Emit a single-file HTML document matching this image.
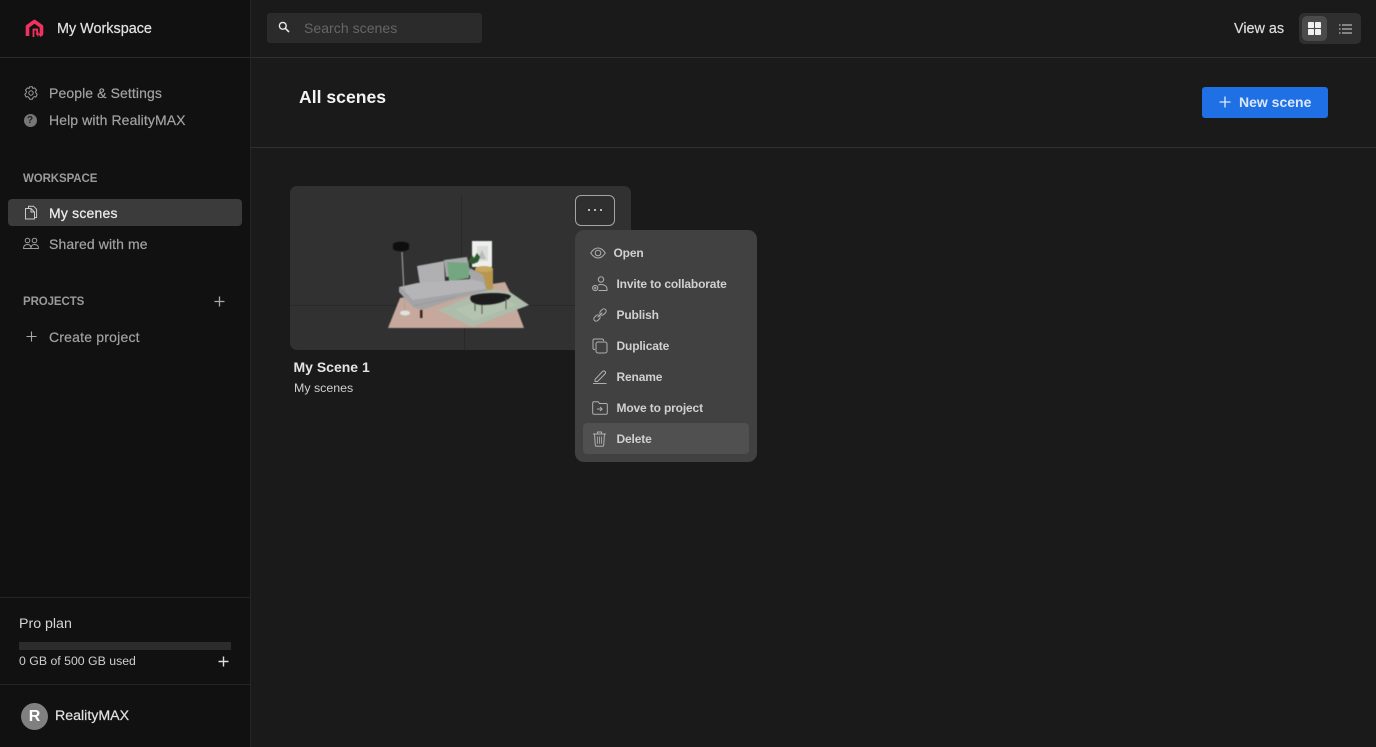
<!DOCTYPE html>
<html lang="en">
<head>
<meta charset="utf-8">
<title>All scenes</title>
<style>
html,body{margin:0;padding:0;width:1376px;height:747px;overflow:hidden;background:#1a1a1b;font-family:"Liberation Sans",sans-serif;}
.t{position:absolute;white-space:nowrap;line-height:18px;}
.a{position:absolute;}
svg{position:absolute;overflow:visible;fill:none;}
.nav{font-size:14px;color:#a2a2a2;letter-spacing:.1px;-webkit-text-stroke:.2px #a2a2a2;}
.head{font-size:11.5px;font-weight:bold;color:#9a9a9a;letter-spacing:-.1px;}
.mi{font-size:12px;font-weight:bold;color:#d0d0d0;letter-spacing:-.15px;}
</style>
</head>
<body>
<!-- sidebar -->
<div class="a" style="left:0;top:0;width:250px;height:747px;background:#111112;border-right:1px solid #252525;"></div>
<div class="a" style="left:0;top:57px;width:250px;height:1px;background:#2b2b2b;"></div>
<div class="a" style="left:0;top:597px;width:250px;height:1px;background:#252525;"></div>
<div class="a" style="left:0;top:684px;width:250px;height:1px;background:#252525;"></div>

<!-- logo -->
<svg style="left:25px;top:19px" width="20" height="20" viewBox="0 0 20 20">
<path d="M2.500 17V7.500L9.500 2.500 16.500 7.500V15L14.500 16.500" stroke="#f0325f" stroke-width="3.600" stroke-linejoin="round"/>
<path d="M8.500 18V10.500H12.200V14" stroke="#f0325f" stroke-width="1.800"/>
<path d="M10.500 14.500L13.500 18V13Z" fill="#f0325f"/>
</svg>
<div class="t" style="left:57px;top:20px;font-size:14.400px;color:#e2e2e2;-webkit-text-stroke:.2px #e2e2e2;">My Workspace</div>

<!-- settings -->
<svg style="left:24px;top:86px" width="14" height="14" viewBox="0 0 14 14">
<path d="M5.600 .8H8.400L8.900 2.500 10.600 1.900 12.600 4.200 11.500 5.600 11.900 7 13.200 8.300 11.900 11 10.200 10.600 9 11.600 8.400 13.200H5.600L5 11.600 3.800 10.600 2.100 11 .8 8.300 2.100 7 2.500 5.600 1.400 4.200 3.400 1.900 5.100 2.500Z" stroke="#9c9c9c" stroke-width="1" stroke-linejoin="round"/>
<circle cx="7" cy="7" r="2.200" stroke="#9c9c9c" stroke-width="1"/>
</svg>
<div class="t nav" style="left:49px;top:84px;">People &amp; Settings</div>
<div class="a" style="left:23.500px;top:113.500px;width:13px;height:13px;border-radius:50%;background:#777;color:#222;font-size:10px;font-weight:bold;line-height:13px;text-align:center;">?</div>
<div class="t nav" style="left:49px;top:111px;">Help with RealityMAX</div>

<!-- workspace -->
<div class="t head" style="left:23px;top:170px;">WORKSPACE</div>
<div class="a" style="left:8px;top:199px;width:234px;height:27px;background:#3b3b3b;border-radius:4px;"></div>
<svg style="left:24px;top:205px" width="14" height="15" viewBox="0 0 14 15">
<path d="M4.500 3V1.200H9.500L12.600 4.300V12.500H11" stroke="#c9c9c9" stroke-width="1"/>
<path d="M1.500 3.500H7L10.500 7V14H1.500Z" stroke="#c9c9c9" stroke-width="1" stroke-linejoin="round"/>
<path d="M7 3.500V7H10.500" stroke="#c9c9c9" stroke-width="1"/>
</svg>
<div class="t" style="left:49px;top:204px;font-size:14px;color:#ececec;letter-spacing:.2px;-webkit-text-stroke:.25px #ececec;">My scenes</div>
<svg style="left:23px;top:237px" width="16" height="13" viewBox="0 0 16 13">
<circle cx="4.500" cy="3.500" r="2.300" stroke="#9c9c9c"/>
<circle cx="11.500" cy="3.500" r="2.300" stroke="#9c9c9c"/>
<path d="M.5 11.500C.5 8.500 2.500 7.500 4.500 7.500S8 8.500 8 11.500ZM8 11.500C8 8.500 9.500 7.500 11.500 7.500S15.500 8.500 15.500 11.500Z" stroke="#9c9c9c" stroke-linejoin="round"/>
</svg>
<div class="t nav" style="left:49px;top:235px;">Shared with me</div>

<!-- projects -->
<div class="t head" style="left:23px;top:293px;">PROJECTS</div>
<svg style="left:214px;top:296px" width="11" height="11" viewBox="0 0 11 11"><path d="M5.500 .5V10.500M.5 5.500H10.500" stroke="#a8a8a8" stroke-width="1.300"/></svg>
<svg style="left:25.500px;top:331px" width="11" height="11" viewBox="0 0 11 11"><path d="M5.500 .5V10.500M.5 5.500H10.500" stroke="#a8a8a8" stroke-width="1.100"/></svg>
<div class="t nav" style="left:49px;top:328px;letter-spacing:.2px;">Create project</div>

<!-- plan -->
<div class="t" style="left:19px;top:615px;font-size:14.200px;color:#d5d5d5;">Pro plan</div>
<div class="a" style="left:19px;top:642px;width:212px;height:8px;background:#2c2c2c;"></div>
<div class="t" style="left:19px;top:652px;font-size:12.300px;color:#cfcfcf;">0 GB of 500 GB used</div>
<svg style="left:218px;top:656px" width="11" height="11" viewBox="0 0 11 11"><path d="M5.500 .5V10.500M.5 5.500H10.500" stroke="#dedede" stroke-width="1.400"/></svg>

<!-- user -->
<div class="a" style="left:21px;top:703px;width:27px;height:27px;border-radius:50%;background:#808080;color:#fff;font-size:16px;font-weight:bold;line-height:27px;text-align:center;">R</div>
<div class="t" style="left:55px;top:707px;font-size:14.200px;color:#e2e2e2;-webkit-text-stroke:.2px #e2e2e2;">RealityMAX</div>

<!-- topbar -->
<div class="a" style="left:251px;top:57px;width:1125px;height:1px;background:#303030;"></div>
<div class="a" style="left:267px;top:13px;width:215px;height:30px;background:#2b2b2c;border-radius:3px;"></div>
<svg style="left:278px;top:21px" width="12" height="12" viewBox="0 0 12 12">
<circle cx="4.800" cy="4.800" r="3.400" stroke="#e8e8e8" stroke-width="1.400"/>
<path d="M7.300 7.300L11 11" stroke="#e8e8e8" stroke-width="1.600"/>
</svg>
<div class="t" style="left:304px;top:19px;font-size:14px;color:#666;letter-spacing:.05px;">Search scenes</div>
<div class="t" style="left:1234px;top:20px;font-size:14.400px;color:#dcdcdc;-webkit-text-stroke:.2px #dcdcdc;">View as</div>
<div class="a" style="left:1299px;top:13px;width:62px;height:31px;background:#2f2f2f;border-radius:5px;"></div>
<div class="a" style="left:1302px;top:16px;width:25px;height:25px;background:#4b4b4b;border-radius:5px;"></div>
<svg style="left:1307.500px;top:22px" width="13" height="13" viewBox="0 0 13 13">
<rect x="0" y="0" width="6" height="6" rx=".8" fill="#f0f0f0"/><rect x="7" y="0" width="6" height="6" rx=".8" fill="#f0f0f0"/><rect x="0" y="7" width="6" height="6" rx=".8" fill="#f0f0f0"/><rect x="7" y="7" width="6" height="6" rx=".8" fill="#f0f0f0"/>
</svg>
<svg style="left:1339px;top:24px" width="13" height="11" viewBox="0 0 13 11">
<path d="M3 1H13M3 5H13M3 9H13" stroke="#dadada" stroke-width="1"/>
<path d="M0 1H1.500M0 5H1.500M0 9H1.500" stroke="#dadada" stroke-width="1.100"/>
</svg>

<!-- title row -->
<div class="t" style="left:299px;top:87px;font-size:17.600px;line-height:20px;font-weight:bold;color:#f4f4f4;">All scenes</div>
<div class="a" style="left:1202px;top:87px;width:126px;height:31px;background:#1f6fe5;border-radius:3px;"></div>
<svg style="left:1219px;top:96px" width="12" height="12" viewBox="0 0 12 12"><path d="M6 .5V11.500M.5 6H11.500" stroke="#dfeafb" stroke-width="1.300"/></svg>
<div class="t" style="left:1239px;top:93px;font-size:14px;font-weight:bold;color:#dbe8fb;">New scene</div>
<div class="a" style="left:251px;top:147px;width:1125px;height:1px;background:#303030;"></div>

<!-- card -->
<div class="a" style="left:290px;top:186px;width:341px;height:164px;background:#313131;border-radius:7px;overflow:hidden;">
  <div class="a" style="left:171px;top:8px;width:1px;height:110px;background:#292929;"></div>
  <div class="a" style="left:174px;top:118px;width:1px;height:46px;background:#292929;"></div>
  <div class="a" style="left:0;top:119px;width:341px;height:1px;background:#292929;"></div>
</div>

<!-- scene art -->
<svg style="left:370px;top:225px;filter:blur(.4px)" width="170" height="115" viewBox="0 0 170 115">
  <polygon points="18,103 30,73 135,57 140,67 148,87 154,103" fill="#c6a99c"/>
  <polygon points="68,85 102,102 159,80 140,67 118,64" fill="#aebcab"/>
  <polygon points="85,84 104,96 146,80 128,70" fill="#b4c2b0"/>
  <!-- picture -->
  <rect x="102" y="16" width="20" height="26" fill="#eeeeec"/>
  <rect x="107" y="21" width="11" height="15" fill="#d9dcd9"/>
  <path d="M108 34L112 25 116 34" fill="#b8bcb8"/>
  <!-- side table -->
  <path d="M105 44C110 41 119 41 123 44L123 64C118 66 110 66 105 62Z" fill="#b9964d"/>
  <ellipse cx="114" cy="44" rx="9" ry="3" fill="#c7a860"/>
  <!-- plant -->
  <path d="M98 37L102 30 104 33 107 28 110 32 108 37 103 39Z" fill="#2f5a30"/>
  <!-- sofa -->
  <polygon points="47,41 74,36 75,57 50,60" fill="#b0b0b2"/>
  <polygon points="74,35 97,32 101,50 76,52" fill="#a8a8aa"/>
  <polygon points="77,37 99,38 99,53 79,56" fill="#74a67f"/>
  <polygon points="100,43 113,50 117,65 112,66 100,55" fill="#a6a6a8"/>
  <polygon points="29,62 47,58 100,54 113,57 116,64 43,75" fill="#b5b5b7"/>
  <polygon points="29,62 43,75 116,64 117,66 85,74 52,85 43,82 29,67" fill="#a4a4a6"/>
  <path d="M43 81L85 72" stroke="#919193" stroke-width=".6"/>
  <rect x="50" y="85" width="2.500" height="8" fill="#3d2219"/>
  <!-- lamp -->
  <path d="M32 27L35 87" stroke="#a5a5a5" stroke-width="1.100"/>
  <ellipse cx="35" cy="88" rx="5" ry="2.500" fill="#e1e1df"/>
  <path d="M23 19C25 16 37 16 39 19V24C36 27 26 27 23 24Z" fill="#0e0e0e"/>
  <!-- coffee table -->
  <path d="M101 71C110 67 138 67 141 71 139 76 126 80 113 80 104 80 98 76 101 71Z" fill="#1d1d1e"/>
  <path d="M105 78V86M112 80V89M136 73V84" stroke="#59584b" stroke-width="1"/>
</svg>

<!-- dots button -->
<div class="a" style="left:575px;top:195px;width:38px;height:29px;border:1px solid #a4a4a4;border-radius:6px;background:#2f2f2f;"></div>
<div class="a" style="left:588px;top:209px;width:2px;height:2px;background:#e6e6e6;border-radius:50%;box-shadow:6px 0 0 #e6e6e6,12px 0 0 #e6e6e6;"></div>

<!-- menu -->
<div class="a" style="left:575px;top:230px;width:182px;height:232px;background:#414141;border-radius:9px;"></div>
<div class="a" style="left:583px;top:423px;width:166px;height:31px;background:#505050;border-radius:4px;"></div>

<svg style="left:590px;top:246px" width="16" height="14" viewBox="0 0 16 14">
<path d="M.7 7C3 3.500 5.500 2 8 2S13 3.500 15.300 7C13 10.500 10.500 12 8 12S3 10.500 .7 7Z" stroke="#b0b0b0"/>
<circle cx="8" cy="7" r="2.800" stroke="#b0b0b0"/>
</svg>
<div class="t mi" style="left:613.500px;top:244px;">Open</div>

<svg style="left:592px;top:276px" width="16" height="16" viewBox="0 0 16 16">
<circle cx="9" cy="3.500" r="2.700" stroke="#b0b0b0"/>
<path d="M6.500 14.500H15V13C15 10 12 8.500 9 8.500 8 8.500 7 8.700 6.200 9" stroke="#b0b0b0"/>
<circle cx="3.200" cy="12" r="2.600" stroke="#b0b0b0"/>
<path d="M1.800 12H4.600M3.200 10.600V13.400" stroke="#b0b0b0" stroke-width=".9"/>
</svg>
<div class="t mi" style="left:616.500px;top:275px;">Invite to collaborate</div>

<svg style="left:592px;top:307px" width="16" height="16" viewBox="0 0 16 16">
<rect x="-3.500" y="-2.300" width="7" height="4.600" rx="2.300" transform="translate(5 11) rotate(-45)" stroke="#b0b0b0"/>
<rect x="-3.500" y="-2.300" width="7" height="4.600" rx="2.300" transform="translate(11 5) rotate(-45)" stroke="#b0b0b0"/>
<path d="M5.700 10.300L10.300 5.700" stroke="#b0b0b0"/>
</svg>
<div class="t mi" style="left:616.500px;top:306px;">Publish</div>

<svg style="left:592px;top:338px" width="16" height="16" viewBox="0 0 16 16">
<path d="M3 11.500H2.500C1.500 11.500 1 11 1 10V2.500C1 1.500 1.500 1 2.500 1H10C11 1 11.500 1.500 11.500 2.500V3" stroke="#b0b0b0"/>
<rect x="4" y="4" width="11" height="11" rx="2" stroke="#b0b0b0"/>
</svg>
<div class="t mi" style="left:616.500px;top:337px;">Duplicate</div>

<svg style="left:593px;top:369px" width="14" height="15" viewBox="0 0 14 15">
<path d="M2 10.500L9.500 2.500C10.300 1.700 11.300 1.700 12 2.400 12.700 3.100 12.700 4.100 12 4.900L4.500 12.500H2Z" stroke="#b0b0b0" stroke-linejoin="round"/>
<path d="M0 14.500H13.500" stroke="#b0b0b0"/>
</svg>
<div class="t mi" style="left:616.500px;top:368px;">Rename</div>

<svg style="left:592px;top:401px" width="16" height="14" viewBox="0 0 16 14">
<path d="M.7 2C.7 1.200 1.200 .8 2 .8H6L7.500 2.500H14C14.800 2.500 15.300 3 15.300 3.800V12C15.300 12.800 14.800 13.200 14 13.200H2C1.200 13.200 .7 12.800 .7 12Z" stroke="#b0b0b0"/>
<path d="M5 8H10M8 6L10.200 8 8 10" stroke="#b0b0b0" stroke-width=".9"/>
</svg>
<div class="t mi" style="left:616.500px;top:399px;">Move to project</div>

<svg style="left:593px;top:431px" width="13" height="16" viewBox="0 0 13 16">
<path d="M0 3H13M4.500 3V1H8.500V3" stroke="#b0b0b0"/>
<path d="M1.500 3L2.300 14.200C2.400 15 2.800 15.300 3.500 15.300H9.500C10.200 15.300 10.600 15 10.700 14.200L11.500 3" stroke="#b0b0b0"/>
<path d="M4.500 5.500V12.800M6.500 5.500V12.800M8.500 5.500V12.800" stroke="#b0b0b0" stroke-width=".8"/>
</svg>
<div class="t mi" style="left:616.500px;top:430px;">Delete</div>

<!-- card text -->
<div class="t" style="left:293.500px;top:358px;font-size:14px;font-weight:bold;color:#e4e4e4;">My Scene 1</div>
<div class="t" style="left:294px;top:379px;font-size:12.400px;color:#cfcfcf;">My scenes</div>
</body>
</html>
